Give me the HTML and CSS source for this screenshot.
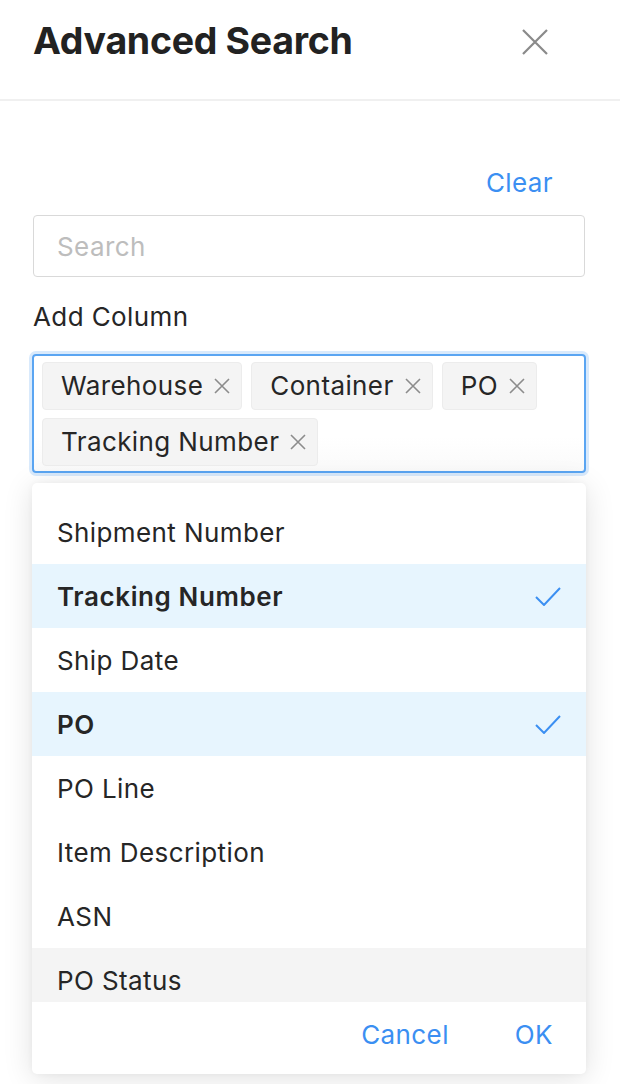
FILE: index.html
```html
<!DOCTYPE html>
<html lang="en">
<head>
<meta charset="utf-8">
<title>Advanced Search</title>
<link rel="stylesheet" href="styles.css">
</head>
<body>
<div class="page">
  <header class="header">
    <h1 class="title">Advanced Search</h1>
    <button class="close" aria-label="Close">
      <svg width="26" height="26" viewBox="0 0 26 26"><path d="M1 1L25 25M25 1L1 25" stroke="#8a8a8a" stroke-width="2.2" fill="none"/></svg>
    </button>
  </header>
  <main class="content">
    <div class="clear-row"><a class="link">Clear</a></div>
    <div class="search"><span class="placeholder">Search</span></div>
    <div class="label">Add Column</div>
    <div class="select">
      <span class="tag">Warehouse<svg class="tag-x" viewBox="0 0 16 16"><path d="M1 1L15 15M15 1L1 15"/></svg></span>
      <span class="tag">Container<svg class="tag-x" viewBox="0 0 16 16"><path d="M1 1L15 15M15 1L1 15"/></svg></span>
      <span class="tag">PO<svg class="tag-x" viewBox="0 0 16 16"><path d="M1 1L15 15M15 1L1 15"/></svg></span>
      <span class="tag">Tracking Number<svg class="tag-x" viewBox="0 0 16 16"><path d="M1 1L15 15M15 1L1 15"/></svg></span>
    </div>
    <div class="dropdown">
      <ul class="options">
        <li class="option">Shipment Number</li>
        <li class="option selected">Tracking Number<svg class="check" viewBox="0 0 26 19"><path d="M1 10L9 18L25 1"/></svg></li>
        <li class="option">Ship Date</li>
        <li class="option selected">PO<svg class="check" viewBox="0 0 26 19"><path d="M1 10L9 18L25 1"/></svg></li>
        <li class="option">PO Line</li>
        <li class="option">Item Description</li>
        <li class="option">ASN</li>
        <li class="option hover">PO Status</li>
      </ul>
      <div class="footer">
        <a class="link">Cancel</a>
        <a class="link">OK</a>
      </div>
    </div>
  </main>
</div>
</body>
</html>
```

FILE: styles.css
```css
* { box-sizing: border-box; }
html, body { margin: 0; padding: 0; background: #fff; }
body {
  font-family: Inter, "Liberation Sans", Arial, sans-serif;
  color: #262626;
  font-size: 26px;
  letter-spacing: 0.4px;
}
.page { width: 620px; height: 1084px; overflow: hidden; }
.header {
  height: 101px;
  border-bottom: 2px solid #f0f0f0;
  display: flex;
  align-items: flex-start;
  justify-content: space-between;
  padding: 18px 72px 0 33px;
}
.title {
  margin: 0;
  font-size: 37.5px;
  font-weight: 700;
  line-height: 46px;
  color: #222;
  letter-spacing: -0.3px;
}
.close {
  border: 0; background: none; padding: 0; margin-top: 11px;
  width: 26px; height: 26px; display: block;
}
.close svg { display: block; }
.content { padding: 0 34px 0 32px; }
.clear-row {
  margin-top: 64px;
  height: 36px;
  display: flex;
  justify-content: flex-end;
  padding-right: 33px;
  line-height: 36px;
}
.link { color: #3b8ff2; cursor: pointer; }
.search {
  margin: 14px 1px 0 1px;
  height: 62px;
  border: 1.5px solid #d9d9d9;
  border-radius: 4px;
  display: flex;
  align-items: center;
  padding-left: 23px;
}
.placeholder { color: #bdbdbd; }
.label {
  margin-top: 22px;
  height: 36px;
  line-height: 36px;
  padding-left: 1px;
}
.select {
  margin-top: 19px;
  border: 2px solid #5aa5f2;
  border-radius: 4px;
  box-shadow: 0 0 0 3px #d9eafc;
  padding: 6px 8px 5px 8px;
  display: flex;
  flex-wrap: wrap;
  gap: 8px 9px;
  background: linear-gradient(#fff 70%, #fafafa);
}
.tag {
  height: 48px;
  display: inline-flex;
  align-items: center;
  padding: 0 11px 0 18px;
  background: #f4f4f4;
  border: 1px solid #ececec;
  border-radius: 4px;
  line-height: 1;
}
.tag-x {
  width: 16px; height: 16px;
  margin-left: 11px;
  stroke: #8c8c8c; stroke-width: 1.6; fill: none;
}
.dropdown {
  margin-top: 10px;
  height: 591px;
  background: #fff;
  border-radius: 5px;
  box-shadow: 0 4px 30px rgba(0,0,0,0.12), 0 0 6px rgba(0,0,0,0.04);
  display: flex;
  flex-direction: column;
  overflow: hidden;
}
.options {
  list-style: none;
  margin: 0;
  padding: 17px 0 0 0;
  height: 519px;
  overflow: hidden;
  flex: none;
}
.option {
  height: 64px;
  display: flex;
  align-items: center;
  justify-content: space-between;
  padding: 0 25px 0 25px;
}
.option.hover { height: 54px; padding-top: 10px; }
.option.selected { background: #e7f5fe; font-weight: 600; letter-spacing: 0.6px; }
.option.hover { background: #f4f4f4; }
.check {
  width: 26px; height: 19px;
  stroke: #3b8ff2; stroke-width: 2; fill: none;
}
.footer {
  height: 72px;
  display: flex;
  justify-content: flex-end;
  align-items: flex-start;
  padding-top: 17px;
  gap: 66px;
  padding-right: 33px;
}
```
